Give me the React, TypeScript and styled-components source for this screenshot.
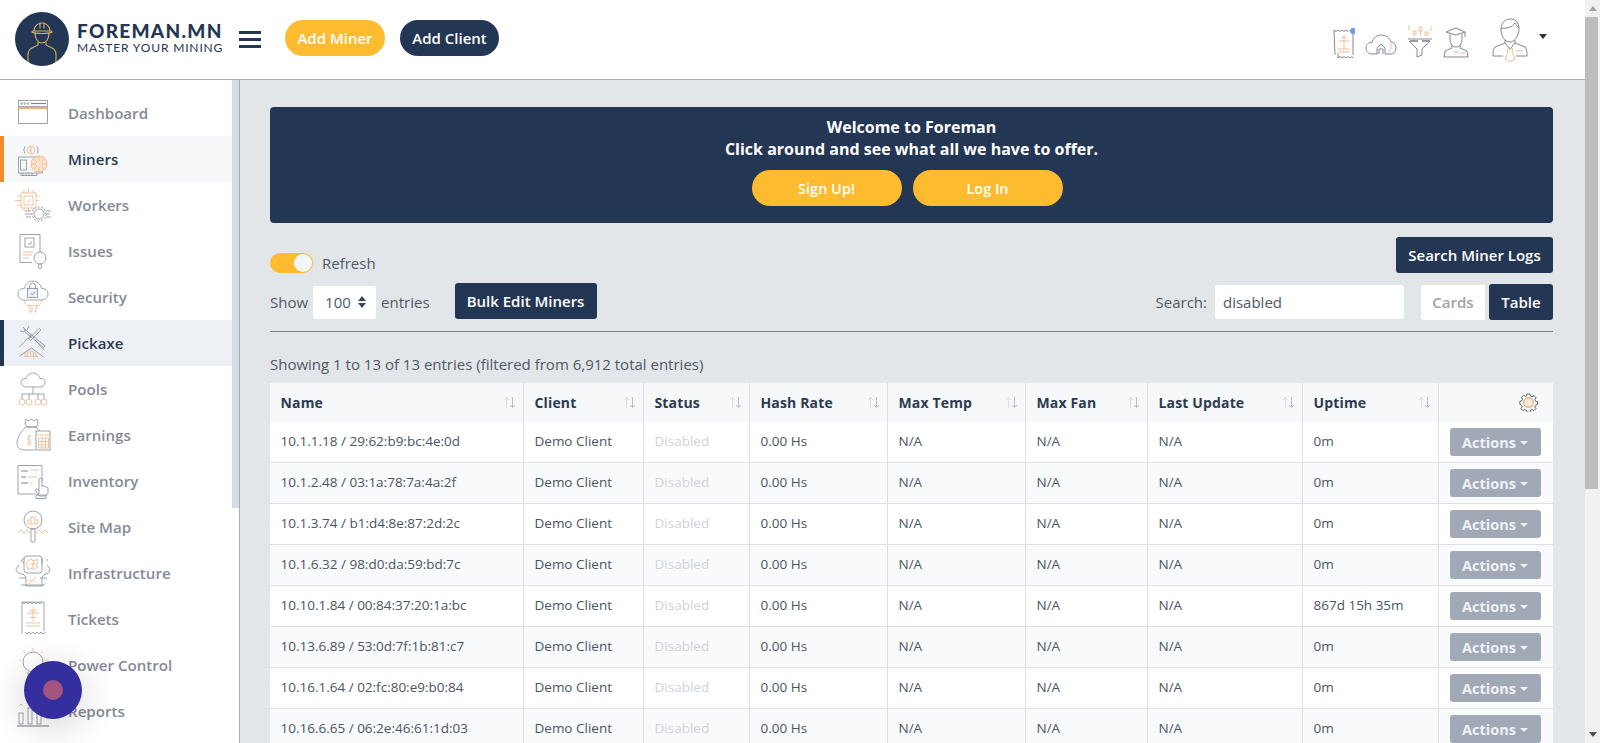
import React from "react";
import styled, { createGlobalStyle } from "styled-components";

const navy = "#233653";
const amber = "#fdbc30";

const GlobalStyle = createGlobalStyle`
  html, body {
    margin: 0;
    height: 100%;
    overflow: hidden;
    font-family: "Open Sans", "Liberation Sans", sans-serif;
  }
  * { box-sizing: border-box; }
`;

const Page = styled.div`
  display: flex;
  width: 100%;
  height: 743px;
  overflow: hidden;
  background: #fff;
`;

const Column = styled.div`
  flex: 1;
  min-width: 0;
  display: flex;
  flex-direction: column;
`;

const TopBar = styled.header`
  flex: none;
  height: 80px;
  display: flex;
  align-items: center;
  padding: 0 0 0 15px;
  border-bottom: 1px solid #adadad;
  background: #fff;
`;

const LogoMark = styled.svg`
  flex: none;
  width: 54px;
  height: 54px;
  margin-top: -2px;
`;

const LogoText = styled.div`
  margin: -5px 17px 0 8px;
  width: 145px;
  color: ${navy};
  font-family: "Lato", "Liberation Sans", sans-serif;
`;

const LogoName = styled.div`
  font-size: 19px;
  line-height: 20px;
  font-weight: 900;
  letter-spacing: 1.3px;
  white-space: nowrap;
`;

const LogoTag = styled.div`
  font-size: 12px;
  line-height: 13px;
  letter-spacing: 0.85px;
  white-space: nowrap;
`;

const Burger = styled.div`
  width: 22px;
  height: 17px;
  margin-right: 24px;
  display: flex;
  flex-direction: column;
  justify-content: space-between;
  i {
    display: block;
    height: 3px;
    background: ${navy};
  }
`;

const Pill = styled.button<{ $tone: "amber" | "navy"; $w: number }>`
  width: ${(p) => p.$w}px;
  height: 36px;
  border: 0;
  padding: 0;
  margin-right: 15px;
  margin-top: -4px;
  border-radius: 18px;
  font-family: inherit;
  font-size: 15px;
  font-weight: 600;
  color: #fff;
  background: ${(p) => (p.$tone === "amber" ? amber : navy)};
`;

const TopIcons = styled.div`
  margin-left: auto;
  display: flex;
  align-items: center;
  padding-right: 38px;
`;

const TopIcon = styled.svg<{ $w: number; $h: number; $m?: number; $up?: number }>`
  width: ${(p) => p.$w}px;
  height: ${(p) => p.$h}px;
  margin-right: ${(p) => p.$m ?? 10}px;
  margin-top: ${(p) => p.$up ?? 0}px;
  fill: none;
  stroke: #747b86;
  stroke-width: 0.9;
  .o { stroke: #eeb07f; stroke-width: 0.8; }
`;

const Caret = styled.span`
  width: 0;
  height: 0;
  margin-top: -7px;
  border-left: 4px solid transparent;
  border-right: 4px solid transparent;
  border-top: 5px solid #2b3440;
`;

const Body = styled.div`
  flex: 1;
  min-height: 0;
  display: flex;
`;

const Sidebar = styled.aside`
  flex: none;
  width: 240px;
  display: flex;
  border-right: 1px solid #adadad;
  background: #fff;
`;

const SideList = styled.nav`
  width: 232px;
  padding-top: 10px;
  overflow: hidden;
`;

const SideRail = styled.div`
  width: 7px;
  i {
    display: block;
    height: 428px;
    background: #d4dce6;
  }
`;

const SideItem = styled.a<{ $active?: "orange" | "navy" }>`
  display: flex;
  align-items: center;
  flex: none;
  height: 46px;
  padding-left: 11px;
  gap: 17px;
  font-size: 15.1px;
  font-weight: 600;
  border-left: 4px solid
    ${(p) => (p.$active === "orange" ? "#f58a2c" : p.$active === "navy" ? navy : "transparent")};
  background: ${(p) => (p.$active === "orange" ? "#f6f8fa" : p.$active === "navy" ? "#edf1f6" : "transparent")};
  color: ${(p) => (p.$active ? "#2c3a50" : "#858a97")};
`;

const SideIcon = styled.svg`
  flex: none;
  width: 36px;
  height: 36px;
  fill: none;
  stroke: #7d8591;
  stroke-width: 0.75;
  .o { stroke: #eeb07f; }
  .of { fill: #fbe3cf; stroke: #eeb07f; }
`;

const Main = styled.main`
  flex: 1;
  min-width: 0;
  padding: 27px 32px 0 30px;
  background: #e3e6e8;
  overflow: hidden;
`;

const Banner = styled.section`
  height: 116px;
  padding-top: 10px;
  border-radius: 4px;
  background: ${navy};
  color: #fff;
  text-align: center;
  font-size: 16px;
  line-height: 21.5px;
  font-weight: 700;
`;

const BannerButtons = styled.div`
  display: flex;
  justify-content: center;
  gap: 11px;
  margin-top: 10px;
  padding-right: 9px;
`;

const BannerButton = styled.button`
  width: 150px;
  height: 36px;
  border: 0;
  border-radius: 18px;
  background: ${amber};
  color: #fff;
  font-family: inherit;
  font-size: 14.5px;
  font-weight: 600;
`;

const ToolRow = styled.div<{ $h: number; $top: number; $end?: boolean }>`
  display: flex;
  justify-content: space-between;
  align-items: ${(p) => (p.$end ? "flex-end" : "center")};
  height: ${(p) => p.$h}px;
  margin-top: ${(p) => p.$top}px;
`;

const Group = styled.div`
  display: flex;
  align-items: center;
`;

const Toggle = styled.div`
  width: 43px;
  height: 20px;
  border-radius: 10px;
  background: ${amber};
  display: flex;
  justify-content: flex-end;
  padding: 1px;
  i {
    width: 18px;
    height: 18px;
    border-radius: 50%;
    background: #f3f6f9;
  }
`;

const ToolLabel = styled.span<{ $left?: number; $right?: number }>`
  font-size: 15px;
  color: #4e5a68;
  margin-left: ${(p) => p.$left ?? 0}px;
  margin-right: ${(p) => p.$right ?? 0}px;
`;

const SelectBox = styled.div`
  width: 63px;
  height: 33px;
  display: flex;
  align-items: center;
  gap: 7px;
  padding-left: 12px;
  background: #fff;
  border-radius: 3px;
  font-size: 15px;
  color: #4e5a68;
  svg { width: 8px; height: 12px; fill: #3c4654; }
`;

const DarkButton = styled.button<{ $w: number; $left?: number; $lift?: number }>`
  width: ${(p) => p.$w}px;
  height: 36px;
  margin-left: ${(p) => p.$left ?? 0}px;
  margin-top: ${(p) => p.$lift ?? 0}px;
  border: 0;
  padding: 0;
  border-radius: 3px;
  background: ${navy};
  color: #fff;
  font-family: inherit;
  font-size: 15px;
  font-weight: 600;
`;

const SearchInput = styled.input`
  width: 189px;
  height: 34px;
  border: 0;
  border-radius: 3px;
  padding: 0 8px;
  background: #fff;
  font-family: inherit;
  font-size: 15px;
  color: #4e5a68;
  outline: none;
`;

const CardsButton = styled.button`
  width: 64px;
  height: 35px;
  margin: 0 4px 0 17px;
  border: 0;
  padding: 0;
  border-radius: 3px 0 0 3px;
  background: #fff;
  color: #a0a4aa;
  font-family: inherit;
  font-size: 15px;
  font-weight: 600;
`;

const Divider = styled.hr`
  margin: 10px 0 0;
  border: 0;
  border-top: 1px solid #7c8288;
`;

const Info = styled.div`
  padding: 22px 0 9px;
  font-size: 15px;
  line-height: 20px;
  color: #4e5a68;
`;

const Table = styled.table`
  width: 1283px;
  table-layout: fixed;
  border-collapse: separate;
  border-spacing: 0;
  font-size: 13.5px;
`;

const HeadCell = styled.th<{ $w: number }>`
  width: ${(p) => p.$w}px;
  height: 39px;
  padding: 0 7px 0 10.5px;
  background: #f6f8fa;
  border-right: 1px solid #dde1e5;
  color: #2d3b50;
  font-size: 14px;
  font-weight: 700;
  letter-spacing: 0.15px;
  text-align: left;
  &:last-child { border-right: 0; }
`;

const HeadInner = styled.div<{ $end?: boolean }>`
  display: flex;
  align-items: center;
  justify-content: ${(p) => (p.$end ? "flex-end" : "space-between")};
  padding-right: ${(p) => (p.$end ? 8 : 0)}px;
`;

const SortMark = styled.svg`
  width: 13px;
  height: 13px;
  fill: none;
  stroke-width: 1;
  .up { stroke: #d9dde1; }
  .down { stroke: #b9bfc6; }
`;

const GearMark = styled.svg`
  width: 19px;
  height: 19px;
  fill: none;
  stroke: #59616c;
  stroke-width: 1;
  .o { stroke: #eeb07f; fill: #fbeadb; stroke-width: 1.4; }
`;

const Row = styled.tr<{ $tint: boolean }>`
  background: ${(p) => (p.$tint ? "#f9fafc" : "#fff")};
`;

const Cell = styled.td<{ $muted?: boolean }>`
  height: 41px;
  padding: 0 0 3px 10.5px;
  border-right: 1px solid #dde1e5;
  border-bottom: 1px solid #dde1e5;
  color: ${(p) => (p.$muted ? "#cfd3d8" : "#4a5563")};
  white-space: nowrap;
  overflow: hidden;
  &:last-child { border-right: 0; padding-bottom: 0; }
`;

const ActionButton = styled.button`
  width: 91px;
  height: 28px;
  display: flex;
  align-items: center;
  justify-content: center;
  gap: 4px;
  border: 0;
  padding: 0;
  border-radius: 3px;
  background: #a1a9b7;
  color: #eef1f5;
  font-family: inherit;
  font-size: 14.5px;
  font-weight: 700;
  i {
    width: 0;
    height: 0;
    margin-top: 2px;
    border-left: 4px solid transparent;
    border-right: 4px solid transparent;
    border-top: 4px solid #eef1f5;
  }
`;

const PageScroll = styled.div`
  flex: none;
  width: 15px;
  height: 100%;
  background: #f1f1f1;
  display: flex;
  flex-direction: column;
  align-items: stretch;
  justify-content: space-between;
`;

const ScrollArrow = styled.div<{ $down?: boolean }>`
  height: 17px;
  display: flex;
  align-items: center;
  justify-content: center;
  &::before {
    content: "";
    border-left: 4px solid transparent;
    border-right: 4px solid transparent;
    ${(p) => (p.$down ? "border-top: 5px solid #505050;" : "border-bottom: 5px solid #a3a3a3;")}
  }
`;

const ScrollThumb = styled.div`
  height: 472px;
  margin-right: 2px;
  background: #bdbdbd;
`;

const ScrollTrack = styled.div`
  flex: 1;
`;

const ChatBubble = styled.div`
  position: fixed;
  left: 24px;
  top: 661px;
  width: 58px;
  height: 58px;
  border-radius: 50%;
  background: #352e9e;
  box-shadow: 0 8px 32px 6px rgba(0, 0, 0, 0.12);
  display: flex;
  align-items: center;
  justify-content: center;
  i {
    width: 20px;
    height: 20px;
    border-radius: 50%;
    background: #a3547f;
  }
`;

const icons: Record<string, React.ReactNode> = {
  Dashboard: (
    <>
      <rect x="3.5" y="5.5" width="29" height="23" />
      <path d="M3.5 11.5h29" />
      <path className="o" d="M3.5 13h29" strokeWidth="2.2" />
      <circle cx="6.5" cy="8.5" r="0.9" />
      <circle cx="9.8" cy="8.5" r="0.9" />
      <circle cx="13.1" cy="8.5" r="0.9" />
      <path d="M16 8.5h15" strokeWidth="1.2" />
    </>
  ),
  Miners: (
    <>
      <circle className="o" cx="16" cy="9" r="4" />
      <path className="o" d="M15.5 6.8v4.4M15 7h1.8M15 9h2M15 11h1.8" />
      <path d="M10 5.5a6 6 0 0 0 0 7M22 5.5a6 6 0 0 1 0 7" />
      <rect x="3.5" y="16" width="24" height="16" />
      <rect x="5.5" y="19" width="6" height="10" />
      <path d="M6 32v2.5h16V32M8 32v2.5M11 32v2.5M14 32v2.5M17 32v2.5" />
      <circle className="of" cx="24" cy="23" r="8" />
      <path className="o" d="M24 15v5M24 26v5M16 23h5M27 23h5M18.5 17.5l3.5 3.5M26 25l3.5 3.5M29.5 17.5L26 21M22 25l-3.5 3.5" />
    </>
  ),
  Workers: (
    <>
      <rect className="o" x="6" y="6" width="15" height="15" />
      <rect className="o" x="9" y="9" width="9" height="9" />
      <path className="o" d="M9 3v3M13.5 1v5M18 3v3M2 9h4M0 13.5h6M2 18h4M9 21v3M13.5 21v3M18 21v3M21 9h4M21 13.5h3M13 16l2-4" />
      <circle cx="24" cy="27" r="5" />
      <circle cx="24" cy="27" r="7" strokeDasharray="2 1.5" />
      <path d="M10 24h6M10 27h7M11 30h5M31 24h5M31 27h4M31 30h5" />
    </>
  ),
  Issues: (
    <>
      <path d="M5 1.5h20v22M5 1.5v28h12" />
      <rect x="10" y="5" width="9" height="9" />
      <path d="M16 8v3h-3" />
      <path className="o" d="M8 19h10M8 22h9M8 25h6" />
      <circle cx="25" cy="25" r="6" fill="#fff" />
      <rect x="23.5" y="31" width="3" height="4.5" rx="1.5" />
    </>
  ),
  Security: (
    <>
      <path d="M9 21h17c4 0 7-2.5 7-6s-3-6-6.500-5.500C25.500 5 22 2 18 2s-8 3-8.500 7.500C6 9 3 11.500 3 15s2.500 6 6 6z" />
      <rect x="12.5" y="9.5" width="10" height="9" fill="#eef2f6" />
      <path d="M14.5 9.5V7a3 3 0 0 1 6 0v2.5M15.5 14l2 2 3-3.5" />
      <path className="o" d="M9 21c1 4 3 6 6 7v5h2v-5M27 21c-1 4-3 6-6 7v5h-2M13 26c2 1 8 1 10 0" />
    </>
  ),
  Pickaxe: (
    <>
      <path d="M8 2l3 4M14 1l-2 4M5 6l4 1" />
      <path d="M10 4.5l20 16.500-1.500 1.500L9 6z" />
      <path d="M24 3.500L13.500 14l2 1.500L26 5z" />
      <path d="M4.500 22L16.500 9.500M20 15l9 10" />
      <path d="M4.500 31l12-8 12 9" />
      <path className="o" d="M10 31v-3h3v-2h5v2h3v3M12.500 31v-2M15.500 31v-4M18.500 31v-2M9 31.500h14" />
    </>
  ),
  Pools: (
    <>
      <path d="M12 16h13c3 0 5-2 5-4.500S28 7 25 7.500C24 4 21 2 18 2s-6 2-7 5.500c-3 0-5 1.500-5 4S8.500 16 12 16z" />
      <path d="M18 16v7M7 28v-5h22v5M14 28v-5M23 28v-5" />
      <circle className="o" cx="7" cy="31" r="3" />
      <circle className="o" cx="14" cy="31" r="3" />
      <circle className="o" cx="23" cy="31" r="3" />
      <circle className="o" cx="29" cy="31" r="3" />
    </>
  ),
  Earnings: (
    <>
      <path d="M11 2l2 2 3-2 3 2 3-2 1 5-2 3h-9l-2-3zM11 10h10" />
      <path d="M11 10C6 14 2 21 2 26c0 5 3 7 8 7h10" />
      <path d="M21 10c2 1.500 3.500 3.500 4 5" />
      <path className="o" d="M16 19.500c-3-1.500-5 2-2 3.500s2 5-2 3.500M14 17v12" />
      <rect x="21" y="14" width="14" height="19" fill="#fff" />
      <path className="o" d="M21 18h14M23.500 21h10v10h-10zM27 21v10M30.500 21v10M23.500 24.500h10M23.500 28h10" />
    </>
  ),
  Inventory: (
    <>
      <path d="M20 31H3V2.500h24v15" />
      <path d="M6 8h7M6 14h5M6 20h7" strokeWidth="1.1" />
      <path className="o" d="M15 7h9M13 14h9M15 20h3" />
      <path d="M24 31V16.500a1.500 1.500 0 0 1 3 0V23l3 .5 3 1V30l-2 3h-7l-4-6c1-1.500 2-1 4 0" />
      <rect x="21" y="32" width="10" height="3.500" />
    </>
  ),
  "Site Map": (
    <>
      <circle cx="18" cy="11" r="9" />
      <path className="o" d="M13 15v-4h3v-3h4v3h3v4zM16 11v4M20 11v4" />
      <rect x="16" y="20" width="4" height="13" rx="1" />
      <path className="o" d="M3 24l3-3 3 3 3-3 3 3M21 24l3-3 3 3 3-3 3 3" />
    </>
  ),
  Infrastructure: (
    <>
      <rect x="9" y="1" width="18" height="17" rx="3" />
      <path className="o" d="M13 6l3-2 3 2 3-2 1 4-2 2 2 2-4 3-3-2-3 2-1-4-1-2zM15 9h6M18 5v9" />
      <path d="M9 3L6 5.500 9 8M27 3v6M32 4v2" />
      <path d="M4 10L1 14c0 3 3 5 7 5l3 3v9h16v-9l3-3c3 0 5-2 5-5l-3-4" />
      <path className="o" d="M14 29l7-7M13 25h4" />
      <path d="M4 23h7M25 23h7M6 30h24" />
    </>
  ),
  Tickets: (
    <>
      <path d="M7 33V1h22v29" />
      <path d="M7 1l2 2 2-2 2 2 2-2 2 2 2-2 2 2 2-2 2 2 2-2M10 31l2 2 2-2 2 2 2-2 2 2 2-2 2 2 2-2 2 2 2-2" />
      <path className="o" d="M18 6v14M12 12h12M14 9l4 1 4-1M15 17l3-1 3 1M11 22h14M11 25h14" />
    </>
  ),
  "Power Control": (
    <>
      <path className="o" d="M18 1v3M8 4l2 2M28 4l-2 2M4 13h3M29 13h3" />
      <circle cx="18" cy="15" r="10" />
      <path d="M13 25v6h10v-6" />
    </>
  ),
  Reports: (
    <>
      <path d="M2 33h32" strokeWidth="1.100" />
      <rect x="4" y="20" width="4" height="11" />
      <rect x="13" y="15" width="4" height="16" />
      <rect x="22" y="20" width="4" height="11" />
      <path className="o" d="M4 13l2-2 2 2M12 8l2-2 2 2" />
    </>
  ),
  Extra: <path d="M18 29a3 3 0 0 1 3 3v4M18 29a3 3 0 0 0-3 3v4" />,
};

const navItems: { label: string; active?: "orange" | "navy" }[] = [
  { label: "Dashboard" },
  { label: "Miners", active: "orange" },
  { label: "Workers" },
  { label: "Issues" },
  { label: "Security" },
  { label: "Pickaxe", active: "navy" },
  { label: "Pools" },
  { label: "Earnings" },
  { label: "Inventory" },
  { label: "Site Map" },
  { label: "Infrastructure" },
  { label: "Tickets" },
  { label: "Power Control" },
  { label: "Reports" },
];

const columns = [
  { label: "Name", width: 254 },
  { label: "Client", width: 120 },
  { label: "Status", width: 106 },
  { label: "Hash Rate", width: 138 },
  { label: "Max Temp", width: 138 },
  { label: "Max Fan", width: 122 },
  { label: "Last Update", width: 155 },
  { label: "Uptime", width: 136 },
];

const miners = [
  { name: "10.1.1.18 / 29:62:b9:bc:4e:0d", uptime: "0m" },
  { name: "10.1.2.48 / 03:1a:78:7a:4a:2f", uptime: "0m" },
  { name: "10.1.3.74 / b1:d4:8e:87:2d:2c", uptime: "0m" },
  { name: "10.1.6.32 / 98:d0:da:59:bd:7c", uptime: "0m" },
  { name: "10.10.1.84 / 00:84:37:20:1a:bc", uptime: "867d 15h 35m" },
  { name: "10.13.6.89 / 53:0d:7f:1b:81:c7", uptime: "0m" },
  { name: "10.16.1.64 / 02:fc:80:e9:b0:84", uptime: "0m" },
  { name: "10.16.6.65 / 06:2e:46:61:1d:03", uptime: "0m" },
];

const Logo = () => (
  <LogoMark viewBox="0 0 54 54">
    <circle cx="27" cy="27" r="27" fill={navy} />
    <g fill="none" stroke="#d6b35f" strokeWidth="1.100">
      <path d="M19 19a8 8 0 0 1 16 0M17 20c3 2 17 2 20 0l-1-1H18zM25 10.500v6M29 10.500v6" />
      <path d="M20 21c0 6 3 10 7 10s7-4 7-10" />
      <path d="M23 30v3l-6 3c-3 1.500-4 4-4 7v7M31 30v3l6 3c3 1.500 4 4 4 7v7" />
    </g>
  </LogoMark>
);

const SortIcon = () => (
  <SortMark viewBox="0 0 13 13">
    <path className="up" d="M3.500 12V1.500M1 4l2.500-2.500L6 4" />
    <path className="down" d="M9.500 1v10.500M7 9l2.500 2.500L12 9" />
  </SortMark>
);

export default function App() {
  return (
    <>
      <GlobalStyle />
      <Page>
        <Column>
          <TopBar>
            <Logo />
            <LogoText>
              <LogoName>FOREMAN.MN</LogoName>
              <LogoTag>MASTER YOUR MINING</LogoTag>
            </LogoText>
            <Burger>
              <i />
              <i />
              <i />
            </Burger>
            <Pill $tone="amber" $w={100}>Add Miner</Pill>
            <Pill $tone="navy" $w={99}>Add Client</Pill>
            <TopIcons>
              <TopIcon $w={22} $h={32} $up={6} viewBox="0 0 22 32">
                <path d="M1 3l2 1.500 2-1.500 2 1.500 2-1.500 2 1.500 2-1.500 2 1.500 1-1M20 6v22M1 3l1 25M5 26v5l2-1.500 2 1.500 2-1.500 2 1.500 2-1.500 2 1.500 2-1.500 1 1.500" />
                <path className="o" d="M11 8v14M6 14h10M8 11l3-1 3 1M5 22h12M5 25h12" />
                <circle cx="20" cy="4" r="3" fill="#6a9ee0" stroke="none" />
              </TopIcon>
              <TopIcon $w={32} $h={21} $up={10} viewBox="0 0 32 21">
                <path d="M12 20H7c-3 0-6-2-6-6s3-6 6-5.500C8 4 12 1 16 1c5 0 9 3 10 7 3 0 5 3 5 6s-2 6-5 6h-6" />
                <path d="M12 20v-6l4-4 4 4v6M14 20v-5h4v5" />
                <path className="o" d="M25 9a6 6 0 0 1-2 9" />
              </TopIcon>
              <TopIcon $w={26} $h={34} $up={3} viewBox="0 0 26 34">
                <path className="o" d="M2 1v5M24 2v5M6 7h3v3H6zM12 3h3v4h-3zM18 8h3v3h-3zM13.500 7v5M7.500 10v2M19.500 11v1" />
                <path d="M1 15h24M2 17l8 8v8l5-2v-6l8-8" />
                <path d="M3 17h8M15 17h8" strokeWidth="1.300" />
              </TopIcon>
              <TopIcon $w={26} $h={31} $m={23} $up={5} viewBox="0 0 26 31">
                <path d="M13 1L3 5l10 3 9-3zM22 5v5M7 7v6c0 4 3 7 6 7s6-3 6-7V7" />
                <path d="M9 18v3l-7 3-1 6h24l-1-6-7-3v-3" />
                <path className="o" d="M10 24l3 2 3-2M17 26h5" />
              </TopIcon>
              <TopIcon $w={36} $h={44} $m={11} viewBox="0 0 36 44">
                <path d="M9 12C9 5 13 1 18 1s9 3 9 10c0 6-4 13-9 13S9 18 9 12zM9 10c5 1 12-1 14-5 1 2 3 4 4 5" />
                <path d="M13 22v3L3 29c-2 2-2 6-2 9h10M23 22v3l10 4c2 2 2 6 2 9H24" />
                <path d="M13 25l5 6 5-6" />
                <path className="o" d="M15 31h6l-1 3 3 7-5 3-5-3 3-7zM24 33h7" />
              </TopIcon>
              <Caret />
            </TopIcons>
          </TopBar>
          <Body>
            <Sidebar>
              <SideList>
                {navItems.map((item) => (
                  <SideItem key={item.label} $active={item.active}>
                    <SideIcon viewBox="0 0 36 36">{icons[item.label]}</SideIcon>
                    {item.label}
                  </SideItem>
                ))}
                <SideItem>
                  <SideIcon viewBox="0 0 36 36">{icons.Extra}</SideIcon>
                </SideItem>
              </SideList>
              <SideRail>
                <i />
              </SideRail>
            </Sidebar>
            <Main>
              <Banner>
                <div>Welcome to Foreman</div>
                <div>Click around and see what all we have to offer.</div>
                <BannerButtons>
                  <BannerButton>Sign Up!</BannerButton>
                  <BannerButton>Log In</BannerButton>
                </BannerButtons>
              </Banner>
              <ToolRow $h={36} $top={14} $end>
                <Group>
                  <Toggle>
                    <i />
                  </Toggle>
                  <ToolLabel $left={9}>Refresh</ToolLabel>
                </Group>
                <DarkButton $w={157}>Search Miner Logs</DarkButton>
              </ToolRow>
              <ToolRow $h={38} $top={10}>
                <Group>
                  <ToolLabel $right={5}>Show</ToolLabel>
                  <SelectBox>
                    100
                    <svg viewBox="0 0 8 12">
                      <path d="M4 0l4 5H0zM0 7h8l-4 5z" />
                    </svg>
                  </SelectBox>
                  <ToolLabel $left={5}>entries</ToolLabel>
                  <DarkButton $w={142} $left={25} $lift={-2}>Bulk Edit Miners</DarkButton>
                </Group>
                <Group>
                  <ToolLabel $right={8}>Search:</ToolLabel>
                  <SearchInput defaultValue="disabled" />
                  <CardsButton>Cards</CardsButton>
                  <DarkButton $w={64}>Table</DarkButton>
                </Group>
              </ToolRow>
              <Divider />
              <Info>Showing 1 to 13 of 13 entries (filtered from 6,912 total entries)</Info>
              <Table>
                <thead>
                  <tr>
                    {columns.map((col) => (
                      <HeadCell key={col.label} $w={col.width}>
                        <HeadInner>
                          {col.label}
                          <SortIcon />
                        </HeadInner>
                      </HeadCell>
                    ))}
                    <HeadCell $w={114}>
                      <HeadInner $end>
                        <GearMark viewBox="0 0 20 20">
                          <path d="M8.500 1h3l.6 2.200 1.700.7 2-1.100 2 2.100-1.100 2 .7 1.700 2.100.6v3l-2.100.6-.7 1.700 1.100 2-2 2.100-2-1.100-1.700.7-.6 2.100h-3l-.6-2.100-1.700-.7-2 1.100-2-2.100 1.100-2-.7-1.700L.9 11.800v-3l2.100-.6.7-1.700-1.100-2 2-2.100 2 1.100 1.700-.7z" />
                          <circle className="o" cx="10" cy="10" r="5" />
                        </GearMark>
                      </HeadInner>
                    </HeadCell>
                  </tr>
                </thead>
                <tbody>
                  {miners.map((miner, i) => (
                    <Row key={miner.name} $tint={i % 2 === 1}>
                      <Cell>{miner.name}</Cell>
                      <Cell>Demo Client</Cell>
                      <Cell $muted>Disabled</Cell>
                      <Cell>0.00 Hs</Cell>
                      <Cell>N/A</Cell>
                      <Cell>N/A</Cell>
                      <Cell>N/A</Cell>
                      <Cell>{miner.uptime}</Cell>
                      <Cell>
                        <ActionButton>
                          Actions
                          <i />
                        </ActionButton>
                      </Cell>
                    </Row>
                  ))}
                </tbody>
              </Table>
            </Main>
          </Body>
        </Column>
        <PageScroll>
          <ScrollArrow />
          <ScrollThumb />
          <ScrollTrack />
          <ScrollArrow $down />
        </PageScroll>
        <ChatBubble>
          <i />
        </ChatBubble>
      </Page>
    </>
  );
}
